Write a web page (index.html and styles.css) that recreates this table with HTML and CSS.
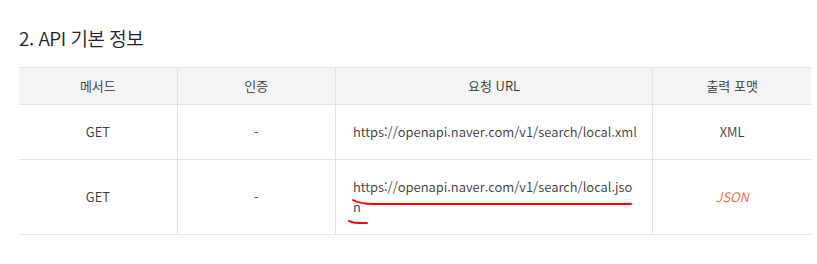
FILE: index.html
```html
<!DOCTYPE html>
<html lang="ko">
<head>
<meta charset="utf-8">
<link rel="stylesheet" href="styles.css">
</head>
<body>
<div class="page">
  <h3 class="title">2. API 기본 정보</h3>
  <table class="api-table">
    <colgroup>
      <col class="c-narrow"><col class="c-narrow"><col class="c-wide"><col class="c-narrow">
    </colgroup>
    <thead>
      <tr><th>메서드</th><th>인증</th><th>요청 URL</th><th>출력 포맷</th></tr>
    </thead>
    <tbody>
      <tr>
        <td>GET</td><td>-</td>
        <td class="url">https://openapi.naver.com/v1/search/local.xml</td>
        <td>XML</td>
      </tr>
      <tr>
        <td>GET</td><td>-</td>
        <td class="url marked">https://openapi.naver.com/v1/search/local.json
          <svg class="scribble" width="300" height="40" viewBox="0 0 300 40">
            <path d="M5 3 C 10 6, 17 7, 26 7 L 283 7" fill="none" stroke="#f00" stroke-width="2" stroke-linecap="round"/>
            <path d="M1 24 C 4 26, 8 26, 19 26" fill="none" stroke="#f00" stroke-width="2" stroke-linecap="round"/>
          </svg>
        </td>
        <td class="json">JSON</td>
      </tr>
    </tbody>
  </table>
</div>
</body>
</html>
```
FILE: styles.css
```css
html, body { margin: 0; padding: 0; background: #fff; }
body {
  font-family: "Noto Sans CJK KR", "Noto Sans", sans-serif;
  color: #3a3a3a;
}
.page { padding: 24px 6px 0 19px; }
.title {
  margin: 0 0 15px;
  font-size: 19px;
  font-weight: 350;
  line-height: 28px;
  letter-spacing: -0.5px;
  color: #222;
}
.api-table {
  width: 792px;
  border-collapse: collapse;
  table-layout: fixed;
  border-top: 1px solid #e3e3e3;
  border-bottom: 1px solid #e3e3e3;
}
.c-narrow { width: 158px; }
.c-wide { width: 317px; }
.api-table th, .api-table td {
  border-left: 1px solid #e3e3e3;
  text-align: center;
  font-size: 13px;
  font-weight: 350;
  line-height: 20px;
  letter-spacing: 0;
}
.api-table th:first-child, .api-table td:first-child { border-left: none; }
.api-table th {
  background: #f4f4f4;
  color: #333;
  height: 36px;
  padding: 0;
  border-bottom: 1px solid #e3e3e3;
}
.api-table td {
  padding: 17px 16px;
  border-top: 1px solid #e3e3e3;
}
.api-table tbody tr:first-child td { border-top: none; }
.api-table td.url { text-align: left; word-break: break-all; padding-left: 17px; padding-right: 14px; }
.marked { position: relative; }
.scribble {
  position: absolute;
  left: 12px;
  top: 37px;
  pointer-events: none;
}
.json { color: #f4633a; font-style: italic; }
```
